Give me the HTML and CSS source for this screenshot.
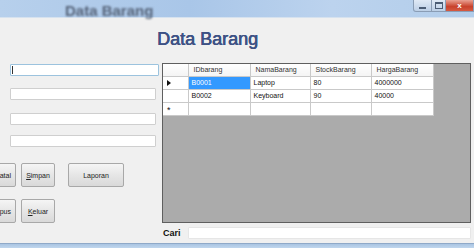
FILE: index.html
```html
<!DOCTYPE html>
<html lang="en">
  <head>
    <meta charset="UTF-8" />
    <title>Data Barang</title>
    <link rel="stylesheet" href="styles.css">
  </head>
  <body>
    <div class="titlebar">
      <span class="caption">Data Barang</span>
      <div class="winbtns">
        <span class="wb wb-min"><i></i></span>
        <span class="wb wb-max"><i></i></span>
        <span class="wb wb-close">x</span>
      </div>
    </div>
    <div class="form">
      <h1>Data Barang</h1>
      <div class="main">
        <div class="left">
          <div class="input focus"><span class="caret"></span></div>
          <div class="input i2"></div>
          <div class="input i3"></div>
          <div class="input i4"></div>
          <div class="btnrow r1">
            <button class="btn cut">Batal</button>
            <button class="btn"><u>S</u>impan</button>
            <button class="btn wide">Laporan</button>
          </div>
          <div class="btnrow r2">
            <button class="btn cut">Hapus</button>
            <button class="btn"><u>K</u>eluar</button>
          </div>
        </div>
        <div class="right">
          <div class="gridview">
            <table>
              <tr class="head">
                <th class="rh"></th>
                <th>IDbarang</th>
                <th>NamaBarang</th>
                <th>StockBarang</th>
                <th>HargaBarang</th>
              </tr>
              <tr>
                <td class="rh"><span class="arrow"></span></td>
                <td class="sel">B0001</td>
                <td>Laptop</td>
                <td>80</td>
                <td>4000000</td>
              </tr>
              <tr>
                <td class="rh"></td>
                <td>B0002</td>
                <td>Keyboard</td>
                <td>90</td>
                <td>40000</td>
              </tr>
              <tr>
                <td class="rh star">*</td>
                <td></td>
                <td></td>
                <td></td>
                <td></td>
              </tr>
            </table>
          </div>
          <div class="search">
            <span class="label">Cari</span>
            <div class="input grow"></div>
          </div>
        </div>
      </div>
    </div>
    <div class="bottombar"></div>
  </body>
</html>
```

FILE: styles.css
```css
body {
  margin: 0;
  width: 474px;
  height: 248px;
  overflow: hidden;
  font-family: "Liberation Sans", Arial, sans-serif;
  background: #f0f0f0;
}
.titlebar {
  height: 18px;
  position: relative;
  background: linear-gradient(to right, #b7d0ec 0%, #a9c6e8 40%, #bcd3ee 70%, #b2cdea 100%);
  border-bottom: 1px solid #d6e2ef;
  box-sizing: border-box;
}
.caption {
  display: block;
  padding-left: 65px;
  padding-top: 2px;
  font-size: 15px;
  font-weight: bold;
  color: #56647a;
  filter: blur(1.3px);
}
.winbtns {
  position: absolute;
  right: 0;
  top: 0;
  display: flex;
}
.wb {
  height: 12px;
  box-sizing: border-box;
  border: 1px solid #8a9db5;
  border-top: 0;
  background: linear-gradient(#dfe9f5, #bccfe6);
  display: flex;
  align-items: center;
  justify-content: center;
}
.wb-min {
  width: 19px;
  border-radius: 0 0 0 3px;
}
.wb-min i {
  width: 7px;
  height: 2px;
  background: #4b5d75;
  margin-top: 4px;
}
.wb-max {
  width: 14px;
  border-left: 0;
}
.wb-max i {
  width: 6px;
  height: 4px;
  border: 1px solid #4b5d75;
  border-top-width: 2px;
}
.wb-close {
  width: 28px;
  border-left: 0;
  background: linear-gradient(#e9a192, #c8412b 60%, #d65a42);
  color: #fff;
  font-size: 8px;
  font-weight: bold;
  line-height: 10px;
}
.form {
  height: 225px;
}
h1 {
  margin: 0;
  padding: 11px 0 0 157px;
  height: 34px;
  box-sizing: border-box;
  font-size: 18px;
  line-height: 20px;
  font-weight: normal;
  color: #3e5285;
  text-shadow: 0.4px 0 0 #3e5285, 0 0.3px 0 #3e5285;
}
.main {
  display: flex;
  margin-top: 11px;
}
.left {
  width: 162px;
  flex: none;
}
.input {
  height: 12px;
  box-sizing: border-box;
  background: #fff;
  border: 1px solid #cfcfcf;
  border-radius: 1px;
  margin-left: 10px;
  width: 146px;
}
.input.focus {
  margin-top: 1px;
  width: 149px;
  border-color: #9cc3de;
  position: relative;
}
.caret {
  position: absolute;
  left: 1px;
  top: 1px;
  width: 1px;
  height: 8px;
  background: #333;
}
.i2 {
  margin-top: 12px;
}
.i3 {
  margin-top: 13px;
}
.i4 {
  margin-top: 10px;
}
.btnrow {
  display: flex;
  gap: 5px;
}
.r1 {
  margin-top: 16px;
}
.r2 {
  margin-top: 12px;
}
.btn {
  width: 34px;
  height: 24px;
  padding: 0;
  box-sizing: border-box;
  border: 1px solid #a8a8a8;
  border-radius: 2px;
  background: linear-gradient(#f5f5f5, #e6e6e6 50%, #d9d9d9);
  font-family: "Liberation Sans", Arial, sans-serif;
  font-size: 7px;
  color: #222;
}
.btn.cut {
  margin-left: -18px;
  text-align: right;
  padding-right: 4px;
}
.btn.wide {
  width: 56px;
  margin-left: 8px;
}
.right {
  width: 309px;
}
.gridview {
  height: 160px;
  box-sizing: border-box;
  border: 1px solid #5f5f5f;
  background: #ababab;
}
table {
  border-collapse: collapse;
  font-size: 7px;
  color: #111;
}
th, td {
  height: 13px;
  padding: 0 0 0 3px;
  box-sizing: border-box;
  border: 1px solid #c9c9c9;
  background: #fff;
  color: #111;
  text-align: left;
  font-weight: normal;
  white-space: nowrap;
}
th {
  height: 12px;
  padding-left: 5px;
  border-top: 0;
  color: #333;
  background: linear-gradient(#ffffff, #f4f4f4);
}
th:nth-child(2), td:nth-child(2) { width: 62px; }
th:nth-child(3), td:nth-child(3) { width: 60px; }
th:nth-child(4), td:nth-child(4) { width: 61px; }
th:nth-child(5), td:nth-child(5) { width: 62px; }
.rh {
  width: 25px;
  border-left: 0;
  padding-left: 4px;
}
td.sel {
  background: #3399ff;
  color: #fff;
}
.arrow {
  display: inline-block;
  border-left: 4px solid #111;
  border-top: 3px solid transparent;
  border-bottom: 3px solid transparent;
  vertical-align: middle;
}
.star {
  font-size: 9px;
  line-height: 9px;
  padding-top: 3px;
}
.search {
  display: flex;
  align-items: center;
  margin-top: 4px;
}
.label {
  font-size: 9px;
  font-weight: bold;
  color: #111;
  padding-left: 1px;
}
.input.grow {
  width: 283px;
  margin-left: 7px;
  border-color: #e6e6e6;
}
.bottombar {
  height: 5px;
  background: linear-gradient(#a9c4e2, #c6dbf0);
  border-top: 1px solid #8fa9c8;
}
```
